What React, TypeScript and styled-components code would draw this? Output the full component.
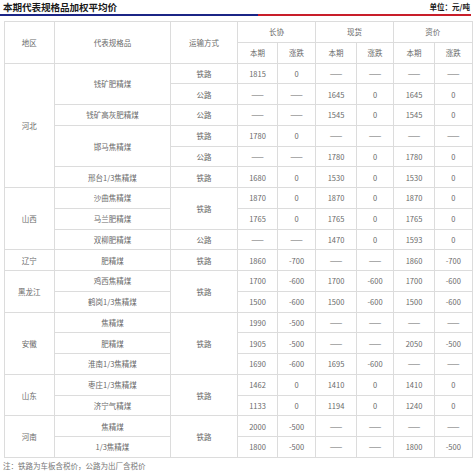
import styled, { createGlobalStyle } from 'styled-components';

const GlobalStyle = createGlobalStyle`
	html,
	body {
		margin: 0;
		padding: 0;
		background: #fff;
	}

	body {
		font-family: 'Noto Sans CJK SC', 'Noto Sans', sans-serif;
	}
`;

const Page = styled.div`
	width: 474px;
	height: 471px;
	overflow: hidden;
	padding: 0 3px 0 3px;
	box-sizing: border-box;
`;

const TitleBar = styled.div`
	display: flex;
	justify-content: space-between;
	align-items: flex-end;
	height: 14px;
	margin: 0 -3px 0 -3px;
	padding: 0 4px 0 3px;
	border-bottom: 2px solid transparent;
	border-image: linear-gradient(to right, #1b2586 0 258px, #c81e2a 258px 470px, transparent 470px) 1;
`;

const Title = styled.h1`
	margin: 0;
	font-size: 9.6px;
	line-height: 14px;
	font-weight: 700;
	color: #1a1a1a;
	letter-spacing: -0.1px;
`;

const Unit = styled.span`
	font-size: 7.5px;
	line-height: 12px;
	font-weight: 700;
	color: #1a1a1a;
	padding-bottom: 1px;
`;

const Table = styled.table`
	margin-top: 5px;
	width: 468px;
	margin-left: 0.5px;
	border-collapse: collapse;
	table-layout: fixed;
	font-size: 7.5px;
	color: #6a6a6a;

	th,
	td {
		border: 1px solid #dcdcdc;
		padding: 0;
		text-align: center;
		vertical-align: middle;
		font-weight: 400;
		white-space: nowrap;
	}

	tr {
		height: 20.75px;
	}
`;

const Note = styled.p`
	margin: 2px 0 0 0;
	font-size: 7.5px;
	line-height: 12px;
	color: #777;
`;

type Row = {
	region?: { name: string; span: number };
	product?: { name: string; span: number };
	transport?: { name: string; span: number };
	values: string[];
};

const D = '——';

const rows: Row[] = [
	{
		region: { name: '河北', span: 6 },
		product: { name: '钱矿肥精煤', span: 2 },
		transport: { name: '铁路', span: 1 },
		values: ['1815', '0', D, D, D, D],
	},
	{
		transport: { name: '公路', span: 1 },
		values: [D, D, '1645', '0', '1645', '0'],
	},
	{
		product: { name: '钱矿高灰肥精煤', span: 1 },
		transport: { name: '公路', span: 1 },
		values: [D, D, '1545', '0', '1545', '0'],
	},
	{
		product: { name: '邯马焦精煤', span: 2 },
		transport: { name: '铁路', span: 1 },
		values: ['1780', '0', D, D, D, D],
	},
	{
		transport: { name: '公路', span: 1 },
		values: [D, D, '1780', '0', '1780', '0'],
	},
	{
		product: { name: '邢台1/3焦精煤', span: 1 },
		transport: { name: '铁路', span: 1 },
		values: ['1680', '0', '1530', '0', '1530', '0'],
	},
	{
		region: { name: '山西', span: 3 },
		product: { name: '沙曲焦精煤', span: 1 },
		transport: { name: '铁路', span: 2 },
		values: ['1870', '0', '1870', '0', '1870', '0'],
	},
	{
		product: { name: '马兰肥精煤', span: 1 },
		values: ['1765', '0', '1765', '0', '1765', '0'],
	},
	{
		product: { name: '双柳肥精煤', span: 1 },
		transport: { name: '公路', span: 1 },
		values: [D, D, '1470', '0', '1593', '0'],
	},
	{
		region: { name: '辽宁', span: 1 },
		product: { name: '肥精煤', span: 1 },
		transport: { name: '铁路', span: 1 },
		values: ['1860', '-700', D, D, '1860', '-700'],
	},
	{
		region: { name: '黑龙江', span: 2 },
		product: { name: '鸡西焦精煤', span: 1 },
		transport: { name: '铁路', span: 2 },
		values: ['1700', '-600', '1700', '-600', '1700', '-600'],
	},
	{
		product: { name: '鹤岗1/3焦精煤', span: 1 },
		values: ['1500', '-600', '1500', '-600', '1500', '-600'],
	},
	{
		region: { name: '安徽', span: 3 },
		product: { name: '焦精煤', span: 1 },
		transport: { name: '铁路', span: 3 },
		values: ['1990', '-500', D, D, D, D],
	},
	{
		product: { name: '肥精煤', span: 1 },
		values: ['1905', '-500', D, D, '2050', '-500'],
	},
	{
		product: { name: '淮南1/3焦精煤', span: 1 },
		values: ['1690', '-600', '1695', '-600', D, D],
	},
	{
		region: { name: '山东', span: 2 },
		product: { name: '枣庄1/3焦精煤', span: 1 },
		transport: { name: '铁路', span: 2 },
		values: ['1462', '0', '1410', '0', '1410', '0'],
	},
	{
		product: { name: '济宁气精煤', span: 1 },
		values: ['1133', '0', '1194', '0', '1240', '0'],
	},
	{
		region: { name: '河南', span: 2 },
		product: { name: '焦精煤', span: 1 },
		transport: { name: '铁路', span: 2 },
		values: ['2000', '-500', D, D, D, D],
	},
	{
		product: { name: '1/3焦精煤', span: 1 },
		values: ['1800', '-500', D, D, '1800', '-500'],
	},
];

const colWidths = [50.5, 116, 67, 40, 38, 41, 37, 41, 37.5];

export default function App(): JSX.Element {
	return (
		<Page>
			<GlobalStyle />
			<TitleBar>
				<Title>本期代表规格品加权平均价</Title>
				<Unit>单位：元/吨</Unit>
			</TitleBar>
			<Table>
				<colgroup>
					{colWidths.map((w, i) => (
						<col key={i} style={{ width: w }} />
					))}
				</colgroup>
				<thead>
					<tr>
						<th rowSpan={2}>地区</th>
						<th rowSpan={2}>代表规格品</th>
						<th rowSpan={2}>运输方式</th>
						<th colSpan={2}>长协</th>
						<th colSpan={2}>现货</th>
						<th colSpan={2}>资价</th>
					</tr>
					<tr>
						<th>本期</th>
						<th>涨跌</th>
						<th>本期</th>
						<th>涨跌</th>
						<th>本期</th>
						<th>涨跌</th>
					</tr>
				</thead>
				<tbody>
					{rows.map((row, i) => (
						<tr key={i}>
							{row.region && (
								<td rowSpan={row.region.span}>{row.region.name}</td>
							)}
							{row.product && (
								<td rowSpan={row.product.span}>{row.product.name}</td>
							)}
							{row.transport && (
								<td rowSpan={row.transport.span}>
									{row.transport.name}
								</td>
							)}
							{row.values.map((v, j) => (
								<td key={j}>{v}</td>
							))}
						</tr>
					))}
				</tbody>
			</Table>
			<Note>注：铁路为车板含税价，公路为出厂含税价</Note>
		</Page>
	);
}
